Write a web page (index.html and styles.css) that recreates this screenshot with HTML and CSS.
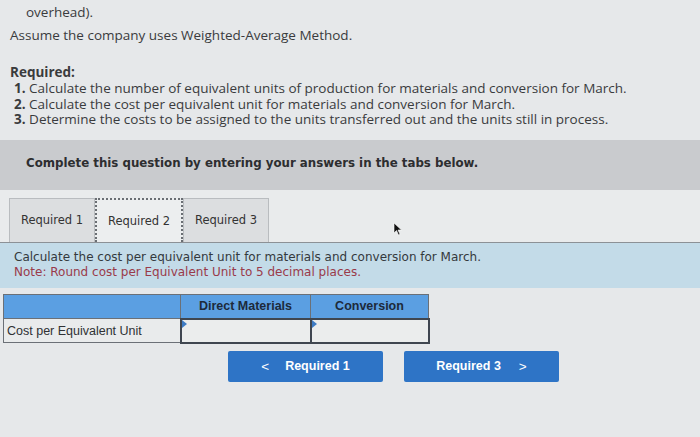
FILE: index.html
```html
<!DOCTYPE html>
<html>
<head>
<meta charset="utf-8">
<link rel="stylesheet" href="styles.css">
</head>
<body>
<div class="intro">
  <p class="overhead">overhead).</p>
  <p class="assume">Assume the company uses Weighted-Average Method.</p>
  <p class="req-title">Required:</p>
  <ol class="req-list">
    <li><b>1.</b> Calculate the number of equivalent units of production for materials and conversion for March.</li>
    <li><b>2.</b> Calculate the cost per equivalent unit for materials and conversion for March.</li>
    <li><b>3.</b> Determine the costs to be assigned to the units transferred out and the units still in process.</li>
  </ol>
</div>
<div class="band">Complete this question by entering your answers in the tabs below.</div>
<div class="tabbar">
  <div class="tab">Required 1</div>
  <div class="tab active">Required 2</div>
  <div class="tab">Required 3</div>
  <svg class="cursor" width="10" height="14" viewBox="0 0 10 14"><path d="M1 1 L1 11 L3.5 8.5 L5.5 13 L7 12.3 L5 8 L8.5 8 Z" fill="#111" stroke="#fff" stroke-width="0.6"/></svg>
</div>
<div class="panel">
  <div class="instr">Calculate the cost per equivalent unit for materials and conversion for March.</div>
  <div class="note">Note: Round cost per Equivalent Unit to 5 decimal places.</div>
</div>
<div class="table-wrap">
  <table class="grid">
    <tr class="head">
      <th class="c1"></th>
      <th class="c2">Direct Materials</th>
      <th class="c3">Conversion</th>
    </tr>
    <tr class="row">
      <td class="label">Cost per Equivalent Unit</td>
      <td class="input"><span class="flag"></span></td>
      <td class="input"><span class="flag"></span></td>
    </tr>
  </table>
</div>
<div class="nav">
  <div class="btn prev"><span class="chev">&lt;</span>Required 1</div>
  <div class="btn next">Required 3<span class="chev">&gt;</span></div>
</div>
</body>
</html>
```
FILE: styles.css
```css
html, body {
  margin: 0;
  padding: 0;
}
body {
  background: #e6e8ea;
  width: 700px;
  height: 437px;
  overflow: hidden;
  font-family: "Open Sans", "Liberation Sans", sans-serif;
  color: #3a3b3d;
}
.intro {
  padding: 4px 0 0 10px;
  font-size: 13.5px;
  line-height: 16px;
}
.intro p { margin: 0; }
.overhead { padding-left: 16px; }
.assume { margin-top: 7px !important; }
.req-title { margin-top: 21px !important; font-weight: 700; }
.req-list {
  list-style: none;
  margin: 1px 0 0 0;
  padding: 0 0 0 4px;
}
.req-list li { line-height: 15.5px; height: 15.5px; }
.band {
  margin-top: 12px;
  height: 50px;
  background: #c9cbce;
  box-sizing: border-box;
  padding: 16px 0 0 26px;
  font-family: "DejaVu Sans", Verdana, sans-serif;
  font-weight: 700;
  font-size: 11.8px;
  color: #2d2e30;
}
.tabbar {
  position: relative;
  height: 53px;
  box-sizing: border-box;
  padding: 9px 0 0 9px;
  display: flex;
  align-items: flex-end;
  background: #e9ebec;
  border-bottom: 1px solid #8c9196;
}
.tab {
  width: 86px;
  height: 44px;
  box-sizing: border-box;
  display: flex;
  align-items: center;
  justify-content: center;
  font-family: "DejaVu Sans", Verdana, sans-serif;
  font-size: 11.5px;
  color: #333;
  background: #dcdee0;
  border: 1px solid #b9bcbf;
  border-bottom: none;
}
.tab.active {
  width: 88px;
  background: #eceeef;
  border: 2px dotted #6a6e73;
  border-bottom: none;
}
.cursor {
  position: absolute;
  left: 393px;
  top: 32px;
}
.panel {
  background: #c3dbe8;
  height: 45px;
  box-sizing: border-box;
  padding: 7px 0 0 14px;
  font-family: "DejaVu Sans", Verdana, sans-serif;
  font-size: 12px;
  line-height: 15px;
  color: #34393d;
}
.note { color: #9a3a4a; }
.table-wrap {
  padding: 6px 0 0 3px;
}
.grid {
  border-collapse: collapse;
  font-family: "Liberation Sans", Arial, sans-serif;
  font-size: 12.5px;
}
.grid th, .grid td {
  padding: 0;
  border: 1px solid #6b7077;
}
.head th {
  height: 23px;
  background: #5b9fe2;
  color: #1d2a3a;
  font-weight: 700;
  text-align: center;
}
.c1 { width: 176px; }
.c2 { width: 129px; }
.c3 { width: 117px; }
.row td { height: 22px; }
.label {
  background: #e9ebec;
  color: #2f3134;
  padding-left: 3px !important;
  text-align: left;
}
.input {
  position: relative;
  background: #ebeded;
  border: 2px solid #3f4650 !important;
}
.flag {
  position: absolute;
  left: 0;
  top: 0;
  width: 0;
  height: 0;
  border-top: 4px solid transparent;
  border-bottom: 4px solid transparent;
  border-left: 5px solid #3d7bc4;
}
.nav {
  display: flex;
  gap: 21px;
  padding: 7px 0 0 228px;
}
.btn {
  width: 155px;
  height: 31px;
  background: #2e74c6;
  border-radius: 2px;
  color: #fff;
  font-family: "Liberation Sans", Arial, sans-serif;
  font-weight: 700;
  font-size: 12.5px;
  display: flex;
  align-items: center;
  justify-content: center;
}
.prev .chev { margin-right: 16px; font-weight: 400; font-size: 13.5px; }
.next .chev { margin-left: 18px; font-weight: 400; font-size: 13.5px; }
```
